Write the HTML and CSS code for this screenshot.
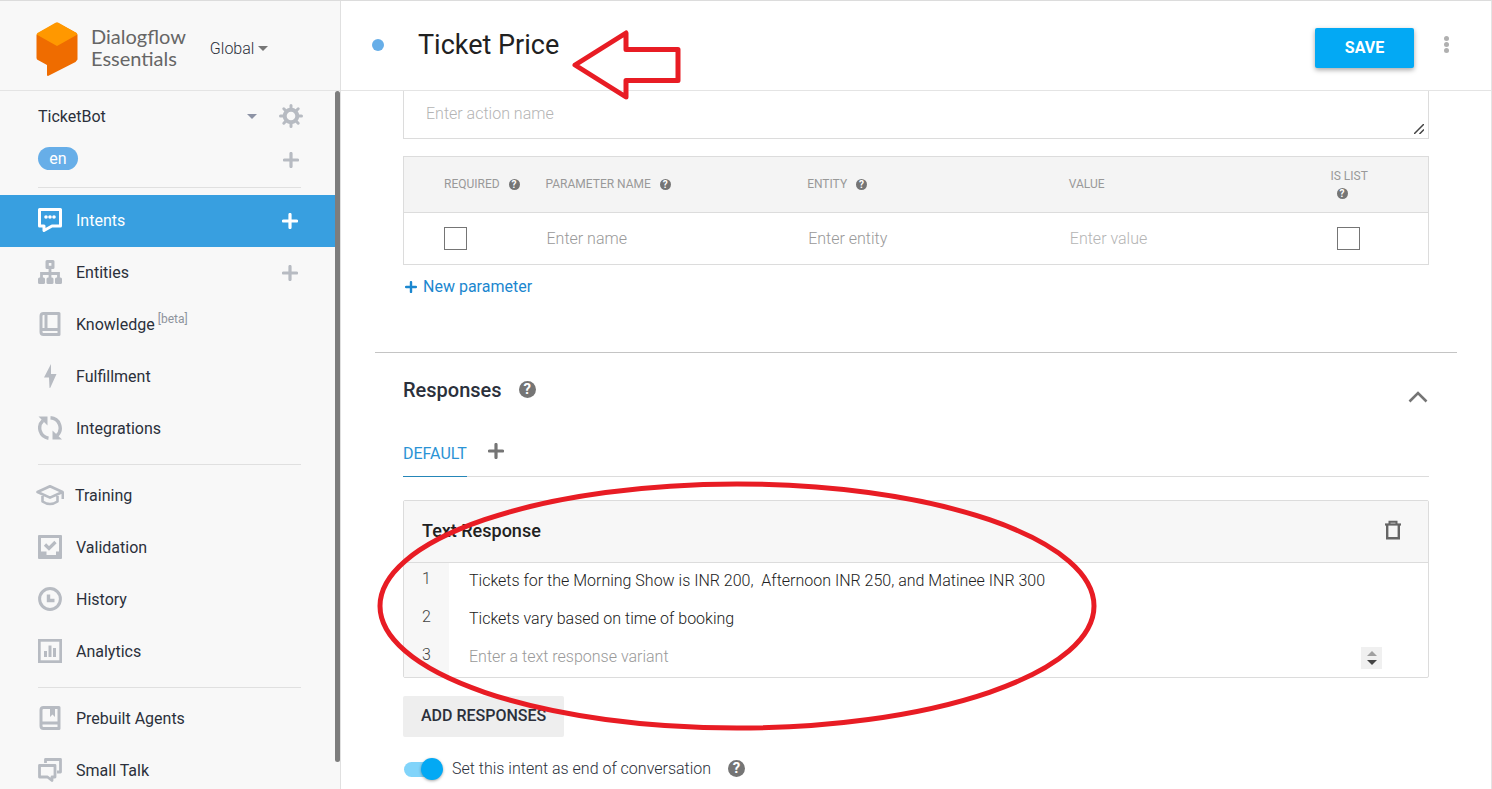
FILE: index.html
```html
<!DOCTYPE html>
<html lang="en">
<head>
    <meta charset="UTF-8">
    <meta name="viewport" content="width=device-width, initial-scale=1.0">
    <title>Ticket Price - Dialogflow</title>
    <link rel="stylesheet" href="styles.css">
</head>
<body>
    <svg class="sprite" aria-hidden="true">
        <symbol id="icon-plus" viewBox="0 0 16 16"><path d="M8 1.500v13M1.500 8h13" fill="none" stroke="currentColor" stroke-width="3.200" stroke-linecap="round"/></symbol>
    </svg>

    <div class="app">
        <aside class="sidebar">
            <div class="brand">
                <svg class="logo" viewBox="0 0 42 54">
                    <path d="M21 .5 40.500 11 41.500 13V37.500L39.500 40 12 54 11 53.500V43L1 37.500 .5 36V13L1.500 11.500Z" fill="#ef6c00"/>
                    <path d="M19.500 .8Q21 0 22.500 .8L40.500 11 41.500 12.500 21 24 .5 12.500 1.500 11Z" fill="#ff9800"/>
                </svg>
                <span class="brand-name">Dialogflow<br>Essentials</span>
                <button class="region">Global <span class="caret"></span></button>
            </div>

            <div class="agent">
                <div class="agent-row">
                    <button class="agent-name">TicketBot <span class="caret"></span></button>
                    <button class="icon-btn" aria-label="Settings">
                        <svg class="gear" viewBox="0 0 24 24" fill="none" stroke="currentColor">
                            <circle cx="12" cy="12" r="6.300" stroke-width="4"/>
                            <path d="M12 5V1.500M12 19v3.500M5 12H1.500M19 12h3.500M7 7 4.800 4.800M17 17l2.200 2.200M7 17l-2.200 2.200M17 7l2.200-2.200" stroke-width="3" stroke-linecap="round"/>
                        </svg>
                    </button>
                </div>
                <div class="agent-row">
                    <span class="lang">en</span>
                    <button class="icon-btn" aria-label="Add language"><svg class="plus"><use href="#icon-plus"/></svg></button>
                </div>
            </div>

            <nav class="menu">
                <div class="menu-item active">
                    <a href="#intents">
                        <svg class="menu-icon" viewBox="0 0 24 24">
                            <path d="M1.500 1.500h21v16.500H14l-8 4.500V18H1.500z" fill="none" stroke="currentColor" stroke-width="3" stroke-linejoin="round"/>
                            <path d="M8 9h.01M12 9h.01M16 9h.01" stroke="currentColor" stroke-width="3.600" stroke-linecap="round"/>
                        </svg>
                        Intents
                    </a>
                    <button class="icon-btn" aria-label="Create intent"><svg class="plus"><use href="#icon-plus"/></svg></button>
                </div>
                <div class="menu-item">
                    <a href="#entities">
                        <svg class="menu-icon" viewBox="0 0 24 24" fill="currentColor">
                            <path d="M9 0h6q1.500 0 1.500 1.500v6Q16.500 9 15 9H9Q7.500 9 7.500 7.500v-6Q7.500 0 9 0zm1.800 3v2.800h2.600V3z" fill-rule="evenodd"/>
                            <path d="M12 8v11M3.500 19v-5.500h17V19" fill="none" stroke="currentColor" stroke-width="2.800"/>
                            <rect x="0" y="17.500" width="7" height="6.500" rx="1.500"/>
                            <rect x="8.500" y="17.500" width="7" height="6.500" rx="1.500"/>
                            <rect x="17" y="17.500" width="7" height="6.500" rx="1.500"/>
                        </svg>
                        Entities
                    </a>
                    <button class="icon-btn" aria-label="Create entity"><svg class="plus"><use href="#icon-plus"/></svg></button>
                </div>
                <div class="menu-item">
                    <a href="#knowledge">
                        <svg class="menu-icon" viewBox="0 0 24 24" fill="none" stroke="currentColor">
                            <path d="M5.500 1.500h15.500v21H5.500Q3 22.500 3 20V4Q3 1.500 5.500 1.500z" stroke-width="3" stroke-linejoin="round"/>
                            <path d="M8 2v14.500M3 17.500h18" stroke-width="3"/>
                        </svg>
                        Knowledge <sup>[beta]</sup>
                    </a>
                </div>
                <div class="menu-item">
                    <a href="#fulfillment">
                        <svg class="menu-icon" viewBox="0 0 24 24"><path d="M13 0 6 13.500h5L11.500 24l.8-.3L18.500 10H13z" fill="currentColor"/></svg>
                        Fulfillment
                    </a>
                </div>
                <div class="menu-item">
                    <a href="#integrations">
                        <svg class="menu-icon" viewBox="0 0 24 24" fill="currentColor">
                            <path d="M10.500 22.200A10.300 10.300 0 0 1 5 4.500M12.500 1.800A10.300 10.300 0 0 1 19 19.500" fill="none" stroke="currentColor" stroke-width="3.400"/>
                            <path d="M.5 .5h9v9z"/>
                            <path d="M14.500 14.500v9H24z"/>
                        </svg>
                        Integrations
                    </a>
                </div>

                <hr>

                <div class="menu-item">
                    <a href="#training">
                        <svg class="menu-icon wide" viewBox="0 0 28 24" fill="none" stroke="currentColor" stroke-width="2.600" stroke-linejoin="round">
                            <path d="M1.500 9 14 3.200 26.500 9 14 14.600zM6.500 11.500v7q7.500 5 15 0v-7M26.800 9v7"/>
                        </svg>
                        Training
                    </a>
                </div>
                <div class="menu-item">
                    <a href="#validation">
                        <svg class="menu-icon" viewBox="0 0 24 24">
                            <rect width="24" height="24" rx="1" fill="currentColor"/>
                            <path d="M3 3h18v13.500h-3v3.500H8.500v-3.500H3z" fill="#f8f8f8"/>
                            <path d="M7 9.500l4 4 6.500-6.500" fill="none" stroke="currentColor" stroke-width="3.200"/>
                        </svg>
                        Validation
                    </a>
                </div>
                <div class="menu-item">
                    <a href="#history">
                        <svg class="menu-icon" viewBox="0 0 24 24" fill="none" stroke="currentColor">
                            <circle cx="12" cy="12" r="10.400" stroke-width="3"/>
                            <path d="M10.500 7.500v6h6" stroke-width="3.400"/>
                        </svg>
                        History
                    </a>
                </div>
                <div class="menu-item">
                    <a href="#analytics">
                        <svg class="menu-icon" viewBox="0 0 24 24" fill="none" stroke="currentColor">
                            <rect x="1.300" y="1.300" width="21.400" height="21.400" stroke-width="2.800"/>
                            <path d="M7.500 18v-6M12 18V6.500M16.500 18V9" stroke-width="3"/>
                        </svg>
                        Analytics
                    </a>
                </div>

                <hr>

                <div class="menu-item">
                    <a href="#prebuilt">
                        <svg class="menu-icon" viewBox="0 0 24 24" fill="none" stroke="currentColor">
                            <path d="M5.500 1.500h15.500v21H5.500Q3 22.500 3 20V4Q3 1.500 5.500 1.500z" stroke-width="3" stroke-linejoin="round"/>
                            <path d="M3 17h18" stroke-width="3"/>
                            <path d="M12 2h5v9l-2.500-2.500L12 11z" fill="currentColor" stroke="none"/>
                        </svg>
                        Prebuilt Agents
                    </a>
                </div>
                <div class="menu-item">
                    <a href="#smalltalk">
                        <svg class="menu-icon" viewBox="0 0 24 24" fill="none" stroke="currentColor" stroke-width="2.800" stroke-linejoin="round">
                            <path d="M1.500 7.500h15.500v11.500h-3v3.500L9.500 19h-8z"/>
                            <path d="M7.500 5V1.500h15v12.500H19"/>
                        </svg>
                        Small Talk
                    </a>
                </div>
            </nav>
            <div class="scroll-thumb"></div>
        </aside>

        <main class="main">
            <header class="topbar">
                <span class="status-dot"></span>
                <h1>Ticket Price</h1>
                <button class="save-btn">SAVE</button>
                <button class="more-btn" aria-label="More"><i></i><i></i><i></i></button>
                <svg class="arrow-mark" viewBox="0 0 110 70">
                    <path d="M4 35 55 3v16.500h52v31H55V67z" fill="none" stroke="#e81c24" stroke-width="5" stroke-linejoin="round"/>
                </svg>
            </header>

            <section class="action">
                <div class="action-box">
                    <textarea class="action-name" placeholder="Enter action name" aria-label="Action name"></textarea>
                    <svg class="grip" viewBox="0 0 10 10"><path d="M0 10 10 0M5.500 10 10 5.500" stroke="#444" stroke-width="1.500"/></svg>
                </div>

                <table class="params">
                    <thead>
                        <tr>
                            <th class="col-required">REQUIRED <span class="help small">?</span></th>
                            <th>PARAMETER NAME <span class="help small">?</span></th>
                            <th>ENTITY <span class="help small">?</span></th>
                            <th>VALUE</th>
                            <th class="col-list">IS LIST <span class="help small">?</span></th>
                        </tr>
                    </thead>
                    <tbody>
                        <tr>
                            <td class="col-required"><input type="checkbox" aria-label="Required"></td>
                            <td><input type="text" placeholder="Enter name" aria-label="Parameter name"></td>
                            <td><input type="text" placeholder="Enter entity" aria-label="Entity"></td>
                            <td><input class="value" type="text" placeholder="Enter value" aria-label="Value"></td>
                            <td class="col-list"><input type="checkbox" aria-label="Is list"></td>
                        </tr>
                    </tbody>
                </table>

                <a class="new-param" href="#new-parameter"><svg><use href="#icon-plus"/></svg>New parameter</a>
            </section>

            <section class="responses">
                <div class="section-head">
                    <h2>Responses</h2>
                    <span class="help">?</span>
                    <button class="collapse" aria-label="Collapse">
                        <svg viewBox="0 0 20 12"><path d="M1.500 10.500 10 2l8.500 8.500" fill="none" stroke="currentColor" stroke-width="2.600"/></svg>
                    </button>
                </div>

                <div class="tabs">
                    <button class="tab">DEFAULT</button>
                    <button class="add-tab" aria-label="Add tab"><svg class="plus"><use href="#icon-plus"/></svg></button>
                </div>

                <div class="card">
                    <div class="card-head">
                        <h3>Text Response</h3>
                        <button class="trash" aria-label="Delete">
                            <svg viewBox="0 0 16 20" fill="none" stroke="currentColor">
                                <path d="M2.200 5v13.200h11.600V5" stroke-width="2.400"/>
                                <path d="M0 4.500h16" stroke-width="2.200"/>
                                <path d="M4.500 4V1.800h7V4" stroke-width="2"/>
                            </svg>
                        </button>
                    </div>
                    <div class="variant">
                        <label for="variant-1">1</label>
                        <input type="text" id="variant-1" value="Tickets for the Morning Show is INR 200,  Afternoon INR 250, and Matinee INR 300">
                    </div>
                    <div class="variant">
                        <label for="variant-2">2</label>
                        <input type="text" id="variant-2" value="Tickets vary based on time of booking">
                    </div>
                    <div class="variant">
                        <label for="variant-3">3</label>
                        <input type="text" id="variant-3" placeholder="Enter a text response variant">
                        <div class="stepper">
                            <button class="up" aria-label="Scroll up"></button>
                            <button class="down" aria-label="Scroll down"></button>
                        </div>
                    </div>
                    <svg class="circle-mark" viewBox="0 0 720 250">
                        <ellipse cx="360" cy="125" rx="357" ry="122" fill="none" stroke="#e81c24" stroke-width="5"/>
                    </svg>
                </div>

                <button class="add-responses">ADD RESPONSES</button>

                <div class="end-row">
                    <input type="checkbox" class="switch" id="end-switch" checked>
                    <label for="end-switch">Set this intent as end of conversation</label>
                    <span class="help">?</span>
                </div>
            </section>
        </main>
    </div>
</body>
</html>
```
FILE: styles.css
```css
* {
    box-sizing: border-box;
}

body {
    margin: 0;
    font-family: Roboto, "Liberation Sans", sans-serif;
    font-size: 16px;
    color: #2b303b;
    background: #fff;
    overflow: hidden;
}

button {
    font: inherit;
    color: inherit;
    background: none;
    border: none;
    padding: 0;
    cursor: pointer;
}

input, textarea {
    font: inherit;
    font-weight: 300;
    border: none;
    outline: none;
    background: none;
}

h1, h2, h3 {
    margin: 0;
}

svg {
    display: block;
}

.sprite {
    position: absolute;
    width: 0;
    height: 0;
}

.app {
    display: flex;
    height: 100vh;
    border-top: 1px solid #dcdcdc;
    border-right: 1px solid #e4e4e4;
}

/* sidebar */
.sidebar {
    position: relative;
    flex: none;
    width: 341px;
    background: #f8f8f8;
    border-right: 1px solid #e0e0e0;
    overflow: hidden;
}

.brand {
    display: flex;
    align-items: center;
    height: 90px;
    padding: 6px 0 0 36px;
    border-bottom: 1px solid #e4e4e4;
}

.logo {
    width: 42px;
    height: 54px;
}

.brand-name {
    margin-left: 13px;
    padding-bottom: 3px;
    font-family: Lato, sans-serif;
    font-size: 20px;
    line-height: 22px;
    color: #666;
}

.region {
    display: flex;
    align-items: center;
    gap: 4px;
    margin-left: 24px;
    font-weight: 300;
}

.caret {
    border: 5px solid transparent;
    border-top-color: #777;
    border-bottom: 0;
}

.agent {
    margin: 0 39px 7px 38px;
    padding: 3px 0 5px;
    border-bottom: 1px solid #e0e0e0;
}

.agent-row {
    display: flex;
    align-items: center;
    justify-content: space-between;
    height: 44px;
    margin-right: -2px;
}

.agent-name {
    display: flex;
    flex: 1;
    align-items: center;
    justify-content: space-between;
    margin-right: 22px;
}

.agent-name .caret {
    border-top-color: #8d93a5;
}

.icon-btn {
    display: flex;
    justify-content: center;
    width: 24px;
    color: #b7bbc2;
}

.gear {
    width: 24px;
    height: 24px;
}

.plus {
    width: 16px;
    height: 16px;
}

.lang {
    width: 40px;
    margin-bottom: 3px;
    line-height: 23px;
    border-radius: 12px;
    background: #67aee8;
    color: #fff;
    text-align: center;
}

.menu-item {
    display: flex;
    align-items: center;
    height: 52px;
    padding: 0 38px;
}

.menu-item a {
    display: flex;
    flex: 1;
    align-items: center;
    padding-bottom: 2px;
    color: inherit;
    text-decoration: none;
}

.menu-item sup {
    margin: -10px 0 0 3px;
    font-size: 12px;
    color: #8d939c;
}

.menu-icon {
    width: 24px;
    height: 24px;
    margin-right: 14px;
    color: #b7bbc2;
}

.menu-icon.wide {
    width: 28px;
    margin: 0 11px 0 -2px;
}

.active {
    margin-right: 5px;
    padding-right: 33px;
    background: #389fe0;
    color: #fff;
}

.active .menu-icon, .active .icon-btn {
    color: #fff;
}

.menu hr {
    height: 1px;
    margin: 9px 39px 5px 38px;
    border: none;
    background: #e0e0e0;
}

.scroll-thumb {
    position: absolute;
    top: 90px;
    right: 0;
    bottom: 27px;
    width: 5px;
    border-radius: 3px;
    background: #7d7d7d;
}

/* main column */
.main {
    flex: 1;
    min-width: 0;
}

.topbar {
    position: relative;
    display: flex;
    align-items: center;
    height: 90px;
    padding: 0 40px 2px 31px;
    border-bottom: 1px solid #e4e4e4;
}

.status-dot {
    width: 12px;
    height: 12px;
    border-radius: 50%;
    background: #67aee8;
}

.topbar h1 {
    flex: 1;
    margin-left: 34px;
    font-size: 27px;
    font-weight: 400;
    color: #212121;
}

.save-btn {
    width: 99px;
    height: 40px;
    margin-top: 6px;
    border-radius: 2px;
    background: #03a9f4;
    color: #fff;
    font-weight: 700;
    box-shadow: 0 2px 5px rgba(0, 0, 0, 0.35);
}

.more-btn {
    display: flex;
    flex-direction: column;
    align-items: center;
    gap: 1px;
    width: 10px;
    margin-left: 27px;
}

.more-btn i {
    width: 5px;
    height: 5px;
    border-radius: 50%;
    background: #b0b0b0;
}

.arrow-mark {
    position: absolute;
    top: 29px;
    left: 230px;
    width: 110px;
    height: 70px;
}

.action {
    margin: 0 34px;
    padding: 0 28px 55px;
    border-bottom: 1px solid #c4c4c4;
}

.action-box {
    position: relative;
}

.action-name {
    display: block;
    width: 100%;
    height: 48px;
    padding: 13px 22px 0;
    border: 1px solid #dcdcdc;
    border-top: none;
    resize: none;
}

.grip {
    position: absolute;
    right: 5px;
    bottom: 5px;
    width: 10px;
    height: 10px;
}

::placeholder {
    color: #999;
    opacity: 1;
}

.action-name::placeholder, .value::placeholder {
    color: #b4b4b4;
}

.params {
    width: 100%;
    margin-top: 17px;
    border: 1px solid #dcdcdc;
    border-collapse: collapse;
    table-layout: fixed;
}

.params th {
    height: 56px;
    padding: 0;
    background: #f4f4f4;
    border-bottom: 1px solid #dcdcdc;
    font-size: 12px;
    font-weight: 400;
    line-height: 17px;
    text-align: left;
    color: #999;
}

.params td {
    height: 52px;
    padding: 0;
}

.params .col-required {
    width: 142px;
    padding-left: 40px;
}

.params .col-list {
    width: 98px;
    padding-right: 50px;
}

.params input[type="text"] {
    width: 100%;
    padding: 0 1px;
}

.params input[type="checkbox"] {
    display: block;
    appearance: none;
    width: 23px;
    height: 23px;
    margin: 0;
    border: 1px solid #757575;
}

.params td.col-list {
    padding-left: 6px;
}

.help {
    display: inline-block;
    width: 17px;
    height: 17px;
    border-radius: 50%;
    background: #757575;
    color: #fff;
    font-size: 15px;
    font-weight: 700;
    line-height: 17px;
    text-align: center;
}

.help.small {
    width: 11px;
    height: 11px;
    margin-left: 6px;
    font-size: 10px;
    line-height: 11px;
}

.new-param {
    display: inline-flex;
    align-items: center;
    gap: 6px;
    margin: 12px 0 0 2px;
    color: #1b87cf;
    text-decoration: none;
}

.new-param svg {
    width: 12px;
    height: 12px;
}

/* responses */
.responses {
    margin: 0 62px;
}

.section-head {
    display: flex;
    align-items: center;
    gap: 17px;
    height: 74px;
}

.section-head h2 {
    font-size: 20px;
    font-weight: 500;
}

.collapse {
    margin: 14px 1px 0 auto;
    color: #757575;
}

.collapse svg {
    width: 20px;
    height: 12px;
}

.tabs {
    display: flex;
    gap: 21px;
    height: 50px;
    border-bottom: 1px solid #dcdcdc;
}

.tab {
    height: 50px;
    padding-top: 4px;
    border-bottom: 1px solid #2586b8;
    color: #2a93d5;
}

.add-tab {
    color: #757575;
}

.card {
    position: relative;
    margin-top: 23px;
    border: 1px solid #dcdcdc;
    border-radius: 2px;
}

.card-head {
    display: flex;
    align-items: center;
    justify-content: space-between;
    height: 62px;
    padding: 0 27px 2px 18px;
    background: #f7f7f7;
    border-bottom: 1px solid #dcdcdc;
}

.card-head h3 {
    font-size: 18px;
    font-weight: 500;
    color: #212121;
}

.trash {
    color: #666;
}

.trash svg {
    width: 16px;
    height: 20px;
}

.variant {
    display: flex;
    align-items: center;
    height: 38px;
}

.variant label {
    width: 45px;
    height: 38px;
    padding-left: 18px;
    line-height: 32px;
    background: #f7f7f7;
    font-weight: 300;
    color: #444;
}

.variant input {
    flex: 1;
    padding: 0 20px 2px;
    color: #212121;
}

.stepper {
    display: flex;
    flex-direction: column;
    align-items: center;
    justify-content: center;
    gap: 4px;
    width: 21px;
    height: 22px;
    margin-right: 46px;
    background: #f0f0f0;
}

.stepper button {
    border: 5px solid transparent;
}

.stepper .up {
    border-top: 0;
    border-bottom-color: #a0a0a0;
}

.stepper .down {
    border-bottom: 0;
    border-top-color: #444;
}

.circle-mark {
    position: absolute;
    top: -20px;
    left: -27px;
    width: 720px;
    height: 250px;
    pointer-events: none;
}

.add-responses {
    height: 41px;
    margin-top: 18px;
    padding: 0 18px 2px;
    border-radius: 2px;
    background: #eee;
    font-weight: 500;
}

.end-row {
    display: flex;
    align-items: center;
    margin-top: 20px;
    font-weight: 300;
}

.end-row .help {
    margin-left: 17px;
}

.switch {
    appearance: none;
    position: relative;
    width: 39px;
    height: 24px;
    margin: 0 9px 0 1px;
}

.switch::before {
    content: "";
    position: absolute;
    inset: 5px 3px 4px 0;
    border-radius: 8px;
    background: #81d4fa;
}

.switch::after {
    content: "";
    position: absolute;
    top: 1px;
    right: 0;
    width: 22px;
    height: 22px;
    border-radius: 50%;
    background: #03a9f4;
    box-shadow: 0 1px 3px rgba(0, 0, 0, 0.35);
}
```
